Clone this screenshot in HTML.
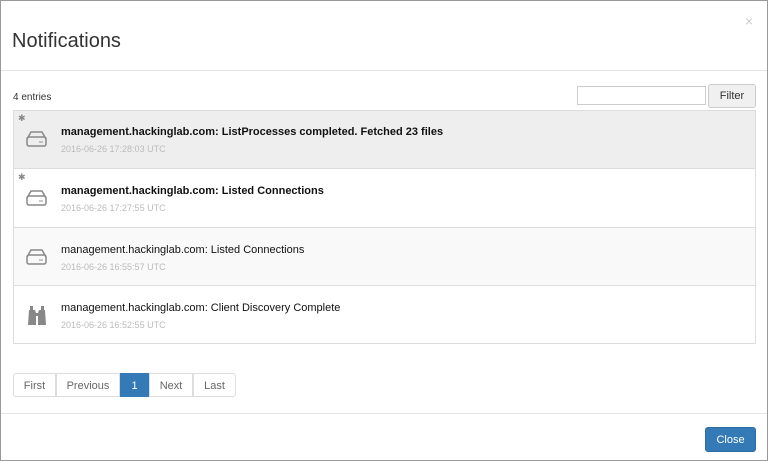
<!DOCTYPE html><html><head><style>
body{margin:0;width:768px;height:461px;background:#fff;font-family:"Liberation Sans",sans-serif;position:relative;overflow:hidden;box-shadow:inset 1px 1px 0 #999,inset -1px -1px 0 #999}
.a{position:absolute}
.row{position:absolute;left:13px;width:743px;height:58px;border-top:1px solid #ddd;box-sizing:border-box}
.t{position:absolute;left:48px;top:16px;font-size:11px;color:#111}
.d{position:absolute;left:48px;top:34px;font-size:9px;color:#bbb}
.ic{position:absolute;left:13px;top:21px}
.st{position:absolute;left:5px;top:3px;font-size:9px;color:#888}
.pg{position:absolute;top:373px;height:24px;border:1px solid #ddd;box-sizing:border-box;font-size:11px;color:#666;text-align:center;line-height:24px;margin-left:-1px}
</style></head><body>
<div class="a" style="left:12px;top:30px;font-size:20px;color:#333">Notifications</div>
<div class="a" style="left:745px;top:13px;font-size:14px;color:#ccc">×</div>
<div class="a" style="left:1px;top:70px;width:766px;border-top:1px solid #e5e5e5"></div>
<div class="a" style="left:13px;top:92px;font-size:10px;color:#333">4 entries</div>
<div class="a" style="left:577px;top:86px;width:129px;height:19px;border:1px solid #ccc;box-sizing:border-box"></div>
<div class="a" style="left:708px;top:84px;width:48px;height:24px;border:1px solid #ccc;border-radius:3px;box-sizing:border-box;background:#f0f0f0;font-size:11px;color:#333;text-align:center;line-height:23px">Filter</div>
<div class="row" style="top:110px;background:#eee;border-top:none"><span class="st">✱</span>
<svg class="ic" width="22" height="16"><rect x="1" y="6" width="19" height="9" rx="2" fill="none" stroke="#888" stroke-width="1.5"/><path d="M1 8L5 1H16L20 8" fill="none" stroke="#888" stroke-width="1.5"/><circle cx="14" cy="11" r=".8" fill="#888"/><circle cx="16" cy="11" r=".8" fill="#888"/></svg>
<div class="t" style="font-weight:bold">management.hackinglab.com: ListProcesses completed. Fetched 23 files</div><div class="d">2016-06-26 17:28:03 UTC</div></div>
<div class="row" style="top:168px;height:59px"><span class="st">✱</span>
<svg class="ic" width="22" height="16"><rect x="1" y="6" width="19" height="9" rx="2" fill="none" stroke="#888" stroke-width="1.5"/><path d="M1 8L5 1H16L20 8" fill="none" stroke="#888" stroke-width="1.5"/><circle cx="14" cy="11" r=".8" fill="#888"/><circle cx="16" cy="11" r=".8" fill="#888"/></svg>
<div class="t" style="font-weight:bold">management.hackinglab.com: Listed Connections</div><div class="d">2016-06-26 17:27:55 UTC</div></div>
<div class="row" style="top:227px;background:#f9f9f9">
<svg class="ic" width="22" height="16"><rect x="1" y="6" width="19" height="9" rx="2" fill="none" stroke="#888" stroke-width="1.5"/><path d="M1 8L5 1H16L20 8" fill="none" stroke="#888" stroke-width="1.5"/><circle cx="14" cy="11" r=".8" fill="#888"/><circle cx="16" cy="11" r=".8" fill="#888"/></svg>
<div class="t">management.hackinglab.com: Listed Connections</div><div class="d">2016-06-26 16:55:57 UTC</div></div>
<div class="row" style="top:285px;height:58px">
<svg class="ic" width="24" height="22" style="top:18px"><path d="M4 2h3v4h-3zM15 2h3v4h-3zM3 6h6l1 3h2l1-3h6l1 15h-8v-9h-2v9h-8z" fill="#888"/></svg>
<div class="t">management.hackinglab.com: Client Discovery Complete</div><div class="d">2016-06-26 16:52:55 UTC</div></div>
<div class="a" style="left:13px;top:110px;width:743px;height:234px;border:1px solid #ddd;box-sizing:border-box"></div>
<div class="pg" style="left:14px;width:43px;border-radius:3px 0 0 3px">First</div>
<div class="pg" style="left:57px;width:64px">Previous</div>
<div class="pg" style="left:121px;width:29px;background:#337ab7;border-color:#337ab7;color:#fff">1</div>
<div class="pg" style="left:150px;width:44px">Next</div>
<div class="pg" style="left:194px;width:43px;border-radius:0 3px 3px 0">Last</div>
<div class="a" style="left:1px;top:413px;width:766px;border-top:1px solid #e5e5e5"></div>
<div class="a" style="left:705px;top:427px;width:51px;height:25px;background:#337ab7;border:1px solid #2e6da4;border-radius:3px;box-sizing:border-box;color:#fff;font-size:11px;text-align:center;line-height:25px">Close</div>
</body></html>
